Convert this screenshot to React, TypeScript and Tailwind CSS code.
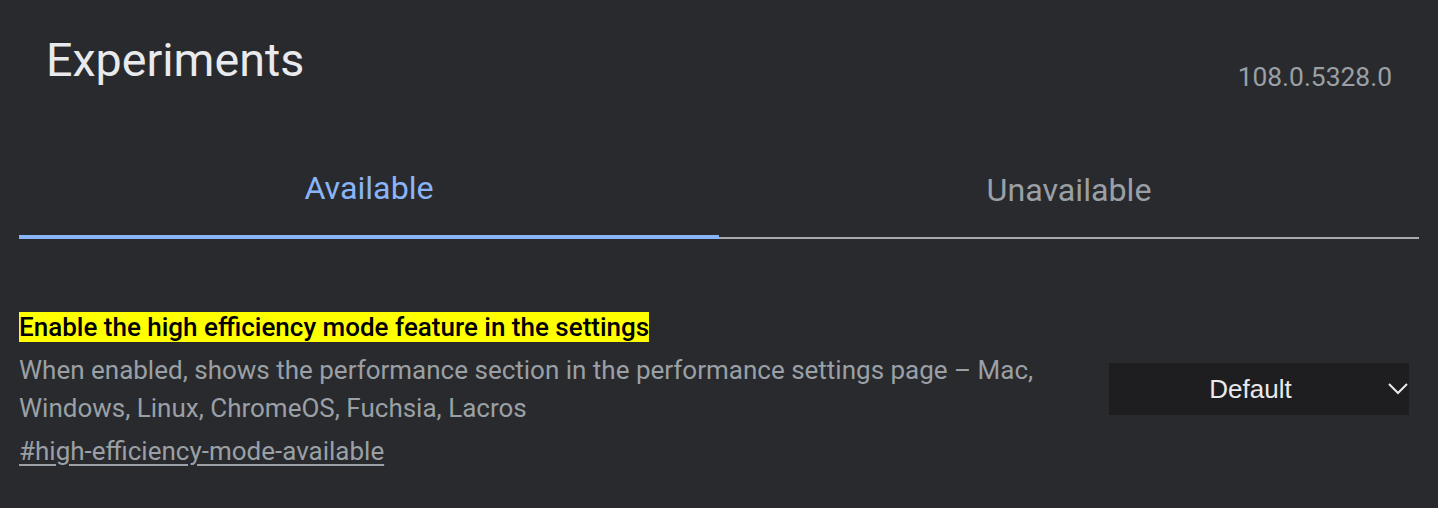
import React from 'react';

export default function App() {
    return (
        <div className="w-[1438px] h-[508px] bg-[#292a2d] overflow-hidden font-['Roboto',sans-serif]">
            {/* Header */}
            <div className="flex items-start justify-between">
                <h1 className="pl-[46px] pt-[37px] text-[46.6px] leading-none font-normal text-[#e8eaed]">
                    Experiments
                </h1>
                <div className="pt-[64px] pr-[46px] text-[26.4px] leading-none text-[#9aa0a6]">
                    108.0.5328.0
                </div>
            </div>

            {/* Tabs */}
            <div className="mx-[19px] mt-[82px] flex">
                <div className="flex-1 flex flex-col">
                    <div className="text-center text-[32.2px] leading-none text-[#8ab4f8] pb-[30px]">Available</div>
                    <div className="h-[4px] bg-[#8ab4f8]" />
                </div>
                <div className="flex-1 flex flex-col">
                    <div className="text-center text-[32.2px] leading-none text-[#9aa0a6] pt-[2px] pb-[28px]">Unavailable</div>
                    <div className="h-[4px] flex items-end">
                        <div className="h-[2px] w-full bg-[#a8abae]" />
                    </div>
                </div>
            </div>

            {/* Experiment */}
            <div className="mt-[73px] pl-[19px] pr-[29px]">
                <div className="h-[30px]">
                    <span className="inline-block h-[30px] leading-[30px] bg-[#ffff00] text-black text-[26px] font-medium">
                        Enable the high efficiency mode feature in the settings
                    </span>
                </div>
                <div className="flex items-start">
                    <div className="flex-1 pr-[40px]">
                        <p className="mt-[9px] text-[26px] leading-[38px] text-[#9aa0a6]">
                            When enabled, shows the performance section in the performance settings page – Mac, Windows, Linux, ChromeOS, Fuchsia, Lacros
                        </p>
                        <a className="block mt-[5px] text-[26px] leading-[38px] text-[#9aa0a6] underline underline-offset-[4px]">
                            #high-efficiency-mode-available
                        </a>
                    </div>
                    <div className="mt-[21px] w-[300px] h-[52px] bg-[#1e1e20] flex items-center">
                        <span className="flex-1 text-center pl-[4px] pt-[1px] text-[26px] text-[#e8eaed] font-['Liberation_Sans',Arial,sans-serif]">
                            Default
                        </span>
                        <svg width="20" height="12" viewBox="0 0 20 12" className="mr-[1px]">
                            <polyline points="1,1 10,10 19,1" fill="none" stroke="#e8eaed" strokeWidth="2" />
                        </svg>
                    </div>
                </div>
            </div>
        </div>
    );
}
